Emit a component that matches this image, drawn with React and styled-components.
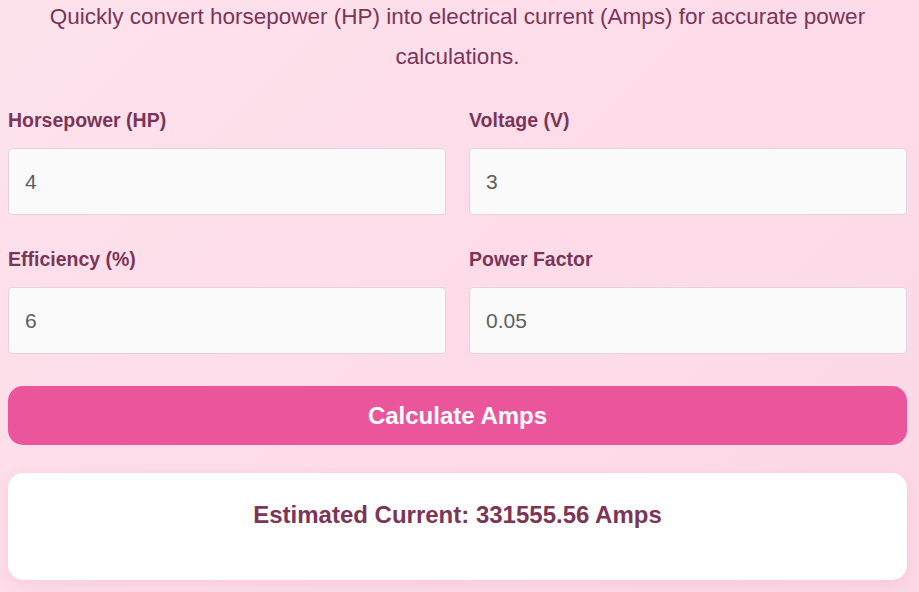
import { createGlobalStyle, styled } from 'styled-components';

const GlobalStyle = createGlobalStyle`
  html, body {
    margin: 0;
    padding: 0;
  }
  body {
    background: linear-gradient(135deg, #fde2ec 0%, #fddbe8 60%, #fcd8e6 100%);
    min-height: 100vh;
    font-family: "Liberation Sans", Arial, sans-serif;
    color: #7b3556;
  }
`;

const Page = styled.main`
  padding: 0 12px 12px 8px;
`;

const Intro = styled.p`
  margin: -3px 0 31px;
  text-align: center;
  font-size: 22.5px;
  line-height: 40px;
  color: #7b3556;
`;

const Grid = styled.div`
  display: grid;
  grid-template-columns: 1fr 1fr;
  column-gap: 23px;
  row-gap: 32px;
`;

const Field = styled.div`
  display: flex;
  flex-direction: column;
`;

const Label = styled.label`
  font-size: 19.5px;
  font-weight: bold;
  line-height: 24px;
  margin-bottom: 16px;
  color: #7b3556;
`;

const Input = styled.input`
  box-sizing: border-box;
  height: 67px;
  width: 100%;
  padding: 0 16px;
  font-family: "Liberation Sans", Arial, sans-serif;
  font-size: 21px;
  color: #5e5e5e;
  background: #fafafa;
  border: 1px solid #e4d3da;
  border-radius: 4px;
  outline: none;
`;

const Button = styled.button`
  display: block;
  width: 100%;
  height: 59px;
  margin-top: 32px;
  border: none;
  border-radius: 15px;
  background: #ea559c;
  color: #fff;
  font-family: "Liberation Sans", Arial, sans-serif;
  font-size: 24px;
  font-weight: bold;
  cursor: pointer;
`;

const Result = styled.section`
  margin-top: 28px;
  height: 107px;
  box-sizing: border-box;
  padding-top: 28px;
  background: #fff;
  border-radius: 15px;
  box-shadow: 0 4px 14px rgba(220, 120, 160, 0.18);
  text-align: center;
`;

const ResultText = styled.h3`
  margin: 0;
  font-size: 24px;
  line-height: 28px;
  font-weight: bold;
  color: #7b3556;
`;

const fields = [
  { id: 'hp', label: 'Horsepower (HP)', value: '4' },
  { id: 'voltage', label: 'Voltage (V)', value: '3' },
  { id: 'eff', label: 'Efficiency (%)', value: '6' },
  { id: 'pf', label: 'Power Factor', value: '0.05' },
];

const App = () => {
  return (
    <>
      <GlobalStyle />
      <Page>
        <Intro>
          Quickly convert horsepower (HP) into electrical current (Amps) for accurate power calculations.
        </Intro>
        <Grid>
          {fields.map((f) => (
            <Field key={f.id}>
              <Label htmlFor={f.id}>{f.label}</Label>
              <Input id={f.id} type="text" defaultValue={f.value} />
            </Field>
          ))}
        </Grid>
        <Button>Calculate Amps</Button>
        <Result>
          <ResultText>Estimated Current: 331555.56 Amps</ResultText>
        </Result>
      </Page>
    </>
  );
};

export default App;
